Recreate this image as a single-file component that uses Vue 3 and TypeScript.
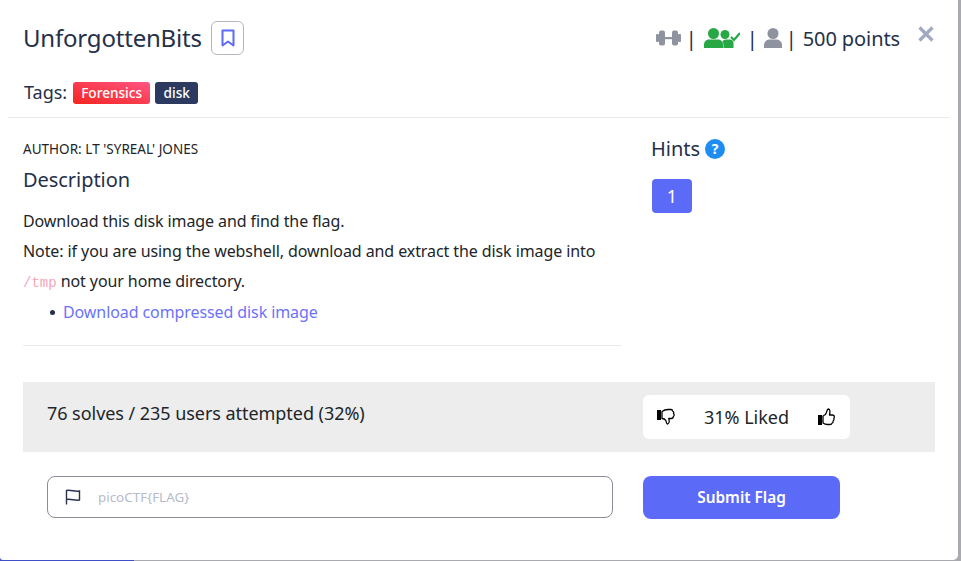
<script setup lang="ts">
const title = "UnforgottenBits";
</script>

<template>
  <div class="page">
    <div class="progress"></div>
    <div class="modal">
      <header class="head">
        <div class="title-row">
          <h1 class="title">{{ title }}</h1>
          <button class="bookmark" type="button" aria-label="Bookmark">
            <svg width="14" height="18" viewBox="0 0 14 18" fill="none" stroke="#5c6af8" stroke-width="2">
              <path d="M1.500 1.500h11v15L7 12.500 1.500 16.500z" stroke-linejoin="round" />
            </svg>
          </button>
          <div class="meta">
            <svg class="ico" width="25" height="16" viewBox="0 0 25 16" fill="#8f929f">
              <rect x="0" y="4" width="3" height="8" rx="1" />
              <rect x="3" y="0.500" width="6" height="15" rx="2" />
              <rect x="9" y="7" width="7" height="2.200" />
              <rect x="16" y="0.500" width="6" height="15" rx="2" />
              <rect x="22" y="4" width="3" height="8" rx="1" />
            </svg>
            <span class="sep first">|</span>
            <svg class="ico" width="36" height="20" viewBox="0 0 36 20" fill="#28a745">
              <circle cx="21" cy="6.500" r="4.500" />
              <path d="M18 20v-5c0-2 2-3.500 4-3.500h4c2 0 3.500 1.500 3.500 3.500v4.500c0 .3-.2.500-.5.500z" />
              <circle cx="9.500" cy="5.500" r="5.500" />
              <path d="M0 20v-3.500C0 13.500 2.500 11.500 5 11.500h9c2.500 0 5 2 5 5V20z" stroke="#fff" stroke-width="0.800" paint-order="stroke" />
              <path d="M27 9l3 3 6-7" fill="none" stroke="#28a745" stroke-width="2.200" />
            </svg>
            <span class="sep">|</span>
            <svg class="ico" width="18" height="20" viewBox="0 0 18 20" fill="#8f929f">
              <circle cx="9" cy="5.500" r="5.500" />
              <path d="M0 20v-3c0-3.500 3-5.500 6-5.500h6c3 0 6 2 6 5.500v3z" />
            </svg>
            <span class="sep last">|</span>
            <span class="points">500 points</span>
          </div>
          <button class="close" type="button" aria-label="Close">
            <svg width="16" height="16" viewBox="0 0 16 16" stroke="#a2a9c0" stroke-width="3.200" fill="none">
              <path d="M1.500 1.500l13 13M14.500 1.500l-13 13" />
            </svg>
          </button>
        </div>
        <div class="tags">
          <span class="tags-label">Tags:</span>
          <span class="tag red">Forensics</span>
          <span class="tag navy">disk</span>
        </div>
      </header>

      <section class="body">
        <div class="left">
          <p class="author">AUTHOR: LT 'SYREAL' JONES</p>
          <h2 class="section">Description</h2>
          <p class="line">Download this disk image and find the flag.</p>
          <p class="line">Note: if you are using the webshell, download and extract the disk image into</p>
          <p class="line"><code>/tmp</code> not your home directory.</p>
          <ul class="links">
            <li><a href="#">Download compressed disk image</a></li>
          </ul>
        </div>
        <div class="right">
          <div class="hints-head">
            <span class="hints">Hints</span>
            <span class="help">?</span>
          </div>
          <button class="hint" type="button">1</button>
        </div>
      </section>

      <section class="stats">
        <div class="solves">76 solves / 235 users attempted (32%)</div>
        <div class="likes">
          <svg width="18" height="18" viewBox="0 0 18 18" fill="none" stroke="#000" stroke-width="1.300">
            <rect x="0" y="2" width="4" height="10" fill="#000" stroke="none" />
            <path d="M5 3.500c2-1.500 4-2 6-2h3c1 0 1.500.7 1.500 1.500 1 .5 1.500 1.500 1 2.500 1 1 .8 2.500-.2 3 0 1.500-1 2-2 2h-2.500c.5 2 .5 5-1 5.500-1.500.3-1.300-2-2-3.500C8 11 6.500 10.500 5 10.500z" stroke-linejoin="round" />
          </svg>
          <span class="liked">31% Liked</span>
          <svg width="18" height="18" viewBox="0 0 18 18" fill="none" stroke="#000" stroke-width="1.300">
            <rect x="0" y="7" width="4" height="10" fill="#000" stroke="none" />
            <path d="M5 8c1.500-.5 3-2 3.500-3.500.4-1.500.5-3.500 2-3.500 1.500.2 1.800 2.500 1 6h3c1 0 1.800.8 1.800 2 0 .7-.2 1.200-.5 1.500.4 1 0 2-.7 2.500.2 1-.3 2-1.200 2.300-.2 1-1 1.200-2 1.200h-2.500c-1.500 0-3-.5-4.400-1.500z" stroke-linejoin="round" />
          </svg>
        </div>
      </section>

      <form class="flag-form" @submit.prevent>
        <label class="flag-input">
          <svg width="16" height="16" viewBox="0 0 16 16" fill="none" stroke="#2b3350" stroke-width="1.400">
            <path d="M1.500 15.500V1.500c4-1 9 1.500 13 .5v9c-4 1-9-1.500-13-.5" />
          </svg>
          <input type="text" placeholder="picoCTF{FLAG}" />
        </label>
        <button class="submit" type="submit">Submit Flag</button>
      </form>
    </div>
  </div>
</template>

<style>
html,
body {
  margin: 0;
  background: #a9a9b0;
}
</style>

<style scoped>
.page {
  position: relative;
  width: 961px;
  height: 561px;
  overflow: hidden;
  background: #a9a9b0;
  font-family: "Noto Sans", "Open Sans", sans-serif;
  color: #212529;
}

.modal {
  position: relative;
  box-sizing: border-box;
  width: 958px;
  height: 560px;
  background: #fff;
  border-radius: 0 0 5px 3px;
}

.head {
  padding: 0 8px;
}

.title-row {
  display: flex;
  align-items: center;
  height: 76px;
  padding: 0 16px 0 15px;
}

.title {
  margin: 0 0 2px;
  font-size: 24px;
  font-weight: 400;
  letter-spacing: -0.2px;
  color: #253049;
}

.bookmark {
  display: flex;
  align-items: center;
  justify-content: center;
  width: 33px;
  height: 34px;
  margin-left: 9px;
  padding: 0 0 0 1px;
  background: #fff;
  border: 1px solid #b4b7c2;
  border-radius: 6px;
}

.meta {
  display: flex;
  align-items: center;
  margin-left: auto;
  font-size: 20px;
  color: #253049;
}

.sep {
  width: 10px;
  margin: 0 7px;
  text-align: center;
}

.sep.first {
  margin: 0 8px 0 5px;
}

.sep.last {
  margin-left: 4px;
}

.points {
  letter-spacing: -0.1px;
}

.close {
  display: flex;
  margin: -9px 0 0 18px;
  padding: 0;
  background: none;
  border: 0;
}

.tags {
  display: flex;
  align-items: flex-start;
  box-sizing: border-box;
  width: 941px;
  height: 42px;
  padding: 6px 0 0 16px;
  border-bottom: 1px solid #e9e9ea;
}

.tags-label {
  font-size: 18px;
  line-height: 21px;
  color: #253049;
  margin-right: 6px;
}

.tag {
  height: 22px;
  padding: 0 8px;
  font-size: 13.600px;
  font-weight: 500;
  line-height: 22px;
  color: #fff;
  border-radius: 3px;
}

.red {
  background: linear-gradient(to top right, #f5251f, #ff5583);
}

.navy {
  margin-left: 5px;
  padding: 0 8.500px;
  background: #2b3a5e;
}

.body {
  display: flex;
  height: 264px;
  padding: 0 23px;
}

.left {
  box-sizing: border-box;
  width: 598px;
  height: 228px;
  padding-top: 22px;
  border-bottom: 1px solid #e9e9ea;
}

.author {
  margin: 0;
  font-size: 13.500px;
  line-height: 18px;
  letter-spacing: 0.03px;
}

.section {
  margin: 8px 0 13px;
  font-size: 20px;
  font-weight: 400;
  line-height: 27px;
  letter-spacing: -0.05px;
  color: #253049;
}

.line {
  margin: 0;
  font-size: 16px;
  line-height: 30px;
  letter-spacing: -0.09px;
}

code {
  font-family: "Liberation Mono", monospace;
  font-size: 14px;
  letter-spacing: 0;
  color: #f8a5bb;
}

.links {
  margin: -1px 0 0;
  padding-left: 27px;
  list-style: none;
  font-size: 16px;
  line-height: 30px;
  letter-spacing: -0.09px;
}

.links li {
  display: flex;
  align-items: center;
  gap: 8px;
}

.links li::before {
  content: "";
  width: 5px;
  height: 5px;
  border-radius: 50%;
  background: #253049;
}

.links a {
  color: #6b73fa;
  text-decoration: none;
}

.right {
  margin-left: 30px;
  padding-top: 17px;
}

.hints-head {
  display: flex;
  align-items: center;
  gap: 5px;
}

.hints {
  font-size: 20px;
  line-height: 27px;
  color: #253049;
}

.help {
  width: 20px;
  height: 20px;
  margin-top: 1px;
  border-radius: 50%;
  background: #1d8df2;
  color: #fff;
  font-size: 14px;
  font-weight: 700;
  line-height: 20px;
  text-align: center;
}

.hint {
  display: block;
  width: 40px;
  height: 34px;
  margin: 17px 0 0 1px;
  padding: 0;
  background: #5c6af8;
  color: #fff;
  border: 0;
  border-radius: 4px;
  font-family: inherit;
  font-size: 18px;
}

.stats {
  display: flex;
  justify-content: space-between;
  box-sizing: border-box;
  width: 912px;
  height: 70px;
  margin-left: 23px;
  padding: 13px 85px 13px 24px;
  background: #ededed;
}

.solves {
  font-size: 18px;
  line-height: 36px;
  letter-spacing: -0.05px;
}

.likes {
  display: flex;
  align-items: center;
  justify-content: space-between;
  box-sizing: border-box;
  width: 207px;
  height: 44px;
  padding: 0 14px;
  background: #fff;
  border-radius: 6px;
  font-size: 18px;
}

.flag-form {
  display: flex;
  padding: 24px 0 0 47px;
}

.flag-input {
  display: flex;
  align-items: center;
  box-sizing: border-box;
  width: 566px;
  height: 42px;
  padding-left: 17px;
  border: 1px solid #8a8d99;
  border-radius: 8px;
}

.flag-input input {
  flex: 1;
  margin-left: 17px;
  padding: 0;
  border: 0;
  outline: 0;
  background: transparent;
  font-family: inherit;
  font-size: 13.400px;
}

.flag-input input::placeholder {
  color: #b4bccb;
  opacity: 1;
}

.submit {
  width: 197px;
  height: 43px;
  margin-left: 30px;
  padding: 0 0 1px;
  background: #5c6af8;
  color: #fff;
  border: 0;
  border-radius: 8px;
  font-family: inherit;
  font-size: 15.400px;
  font-weight: 600;
}

.progress {
  position: absolute;
  left: 0;
  bottom: 0;
  width: 134px;
  height: 4px;
  background: #3f4fc8;
}
</style>
